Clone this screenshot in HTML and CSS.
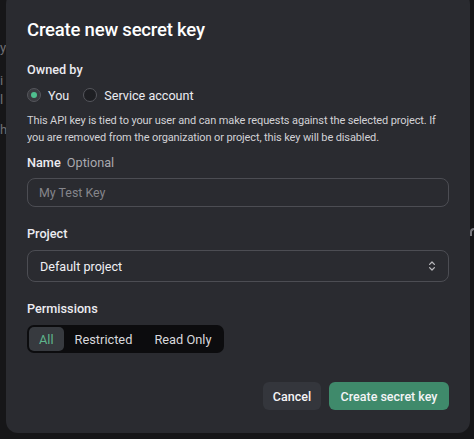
FILE: index.html
```html
<!DOCTYPE html>
<html>
<head>
<meta charset="utf-8">
<link rel="stylesheet" href="styles.css">
</head>
<body>
<div class="bg-left">
  <div class="bg-ch c1">y</div>
  <div class="bg-ch c2">i</div>
  <div class="bg-ch c3">l</div>
  <div class="bg-ch c4">h</div>
</div>
<div class="bg-right"></div>
<div class="modal">
  <h1 class="title">Create new secret key</h1>
  <div class="label owned">Owned by</div>
  <div class="radios">
    <label class="radio"><span class="dot checked"></span>You</label>
    <label class="radio"><span class="dot"></span>Service account</label>
  </div>
  <p class="desc">This API key is tied to your user and can make requests against the selected project. If<br>you are removed from the organization or project, this key will be disabled.</p>
  <div class="label name">Name <span class="optional">Optional</span></div>
  <div class="input">My Test Key</div>
  <div class="label project">Project</div>
  <div class="select">
    <span>Default project</span>
    <svg class="chev" width="8" height="12" viewBox="0 0 8 12"><path d="M1.6 4.4 L4 2 L6.4 4.4 M1.6 7.6 L4 10 L6.4 7.6" fill="none" stroke="#b8b8bc" stroke-width="1.3" stroke-linecap="round" stroke-linejoin="round"/></svg>
  </div>
  <div class="label perms">Permissions</div>
  <div class="segmented">
    <span class="seg active">All</span>
    <span class="seg">Restricted</span>
    <span class="seg">Read Only</span>
  </div>
  <div class="actions">
    <button class="btn cancel">Cancel</button>
    <button class="btn primary">Create secret key</button>
  </div>
</div>
</body>
</html>
```
FILE: styles.css
```css
html, body {
  margin: 0;
  padding: 0;
}
body {
  background: #161618;
  width: 474px;
  height: 439px;
  overflow: hidden;
  position: relative;
  font-family: Roboto, "Liberation Sans", sans-serif;
  color: #ececf1;
}
.bg-left {
  position: absolute;
  left: 0;
  top: 0;
  width: 8px;
  height: 200px;
  color: #707076;
  font-size: 13px;
}
.bg-ch {
  position: absolute;
  left: 0;
  line-height: 16px;
}
.c1 { top: 40px; }
.c2 { top: 73px; }
.c3 { top: 92px; }
.c4 { top: 122px; }
.bg-right {
  position: absolute;
  left: 470px;
  top: 228px;
  width: 4px;
  height: 8px;
  border-top: 2px solid #77777c;
  border-left: 2px solid #77777c;
  border-radius: 4px 0 0 0;
  box-sizing: border-box;
}
.modal {
  position: relative;
  z-index: 1;
  margin: -8px 0 0 6px;
  width: 464px;
  box-sizing: border-box;
  background: #2a2b30;
  border-radius: 12px;
  padding: 26px 21px 23px 21px;
}
.title {
  margin: 0;
  font-size: 18.5px;
  line-height: 24px;
  font-weight: 500;
  color: #ffffff;
  letter-spacing: -0.2px;
}
.label {
  font-size: 12.7px;
  line-height: 20px;
  font-weight: 500;
  color: #ececf1;
}
.owned { margin-top: 18px; }
.radios {
  margin-top: 5px;
  display: flex;
  gap: 14px;
  height: 20px;
  align-items: center;
}
.radio {
  display: flex;
  align-items: center;
  gap: 7px;
  font-size: 12.6px;
  color: #ececf1;
}
.dot {
  width: 12px;
  height: 12px;
  border-radius: 50%;
  border: 1px solid #55565c;
  background: #1e1f23;
  display: flex;
  align-items: center;
  justify-content: center;
}
.dot.checked {
  background: #3a3b40;
}
.dot.checked::after {
  content: "";
  width: 6px;
  height: 6px;
  border-radius: 50%;
  background: #4fbf8e;
}
.desc {
  margin: 7px 0 0;
  font-size: 11px;
  letter-spacing: -0.12px;
  line-height: 17px;
  color: #d2d2d6;
  white-space: nowrap;
}
.name { margin-top: 7px; }
.optional {
  font-weight: 400;
  color: #a9a9ae;
  margin-left: 3px;
}
.input {
  margin-top: 5px;
  height: 29px;
  box-sizing: border-box;
  border: 1px solid #4c4d53;
  border-radius: 8px;
  padding: 0 11px;
  display: flex;
  align-items: center;
  font-size: 12.4px;
  color: #85858b;
}
.project { margin-top: 17px; }
.select {
  margin-top: 6px;
  height: 32px;
  box-sizing: border-box;
  border: 1px solid #4c4d53;
  border-radius: 8px;
  padding: 0 12px 0 12px;
  display: flex;
  align-items: center;
  justify-content: space-between;
  font-size: 12.6px;
  color: #f0f0f4;
}
.perms { margin-top: 17px; }
.segmented {
  margin-top: 6px;
  display: inline-flex;
  height: 28px;
  box-sizing: border-box;
  padding: 2px;
  background: #0c0c0e;
  border-radius: 7px;
  align-items: stretch;
}
.seg {
  display: flex;
  align-items: center;
  padding: 0 11px;
  font-size: 12.8px;
  color: #d8d8dc;
  border-radius: 5px;
}
.seg.active {
  background: #373a3f;
  color: #5fb58c;
  padding: 0 10px;
}
.actions {
  margin-top: 29px;
  display: flex;
  justify-content: flex-end;
  gap: 8px;
}
.btn {
  height: 28px;
  border: none;
  border-radius: 6px;
  font-family: inherit;
  font-size: 12.5px;
  font-weight: 500;
  color: #f4f4f6;
}
.cancel {
  background: #34363c;
  padding: 0 10px;
}
.primary {
  background: #3f8a6b;
  padding: 0 11.5px;
}
```
